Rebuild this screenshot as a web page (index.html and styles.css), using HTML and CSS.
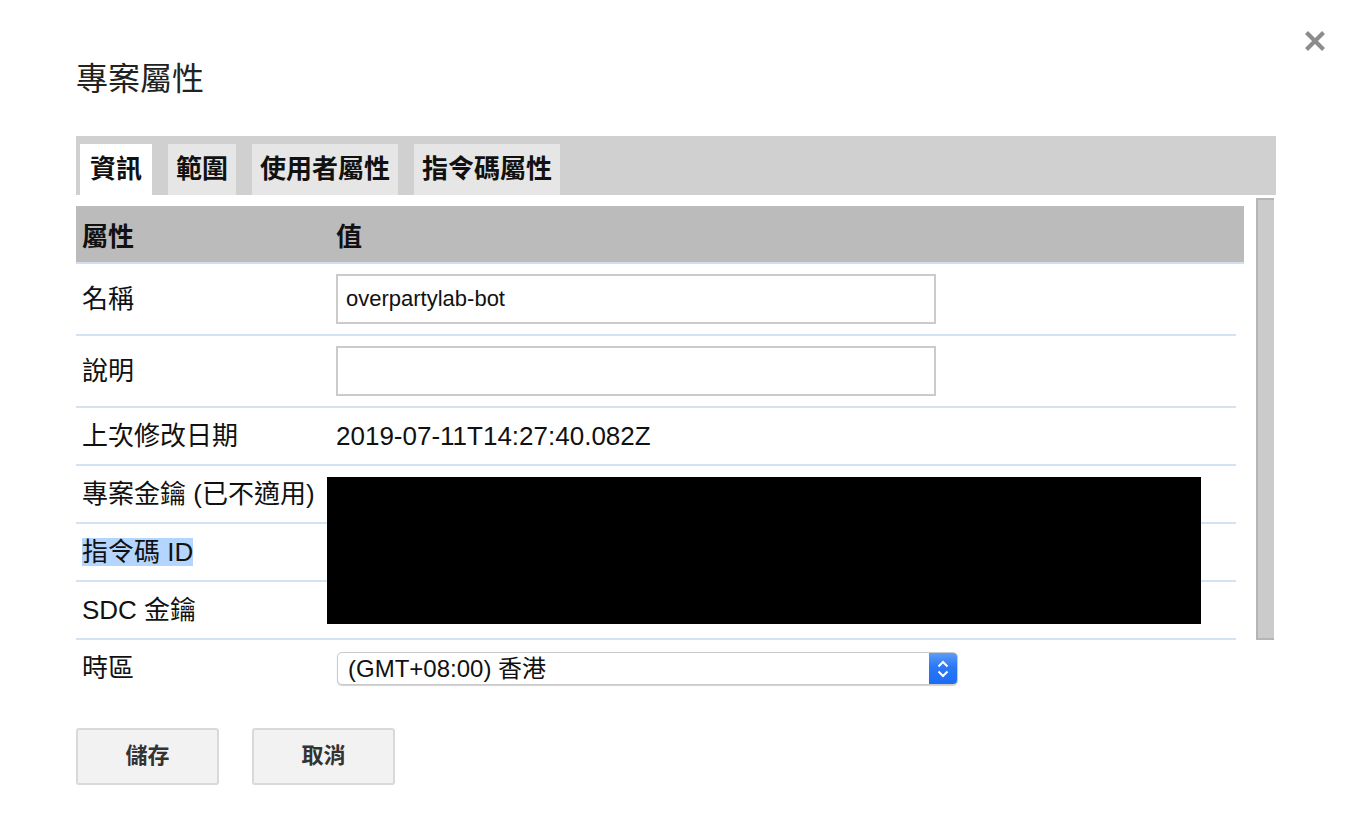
FILE: index.html
```html
<!DOCTYPE html>
<html lang="zh-Hant">
<head>
<meta charset="utf-8">
<title>專案屬性</title>
<link rel="stylesheet" href="styles.css">
</head>
<body>
<div class="dialog">
  <button class="close" aria-label="close">
    <svg width="22" height="22" viewBox="0 0 22 22"><path d="M2.5 2.5 L19.5 19.5 M19.5 2.5 L2.5 19.5" stroke="#8c8c8c" stroke-width="4.2" stroke-linecap="butt"/></svg>
  </button>
  <h1 class="title">專案屬性</h1>
  <div class="tabbar">
    <div class="tab active">資訊</div>
    <div class="tab">範圍</div>
    <div class="tab">使用者屬性</div>
    <div class="tab">指令碼屬性</div>
  </div>
  <div class="content">
    <div class="table">
      <div class="thead">
        <div class="c1">屬性</div>
        <div class="c2">值</div>
      </div>
      <div class="rows">
        <div class="row tall">
          <div class="c1">名稱</div>
          <div class="c2"><div class="input">overpartylab-bot</div></div>
        </div>
        <div class="row tall">
          <div class="c1">說明</div>
          <div class="c2"><div class="input"></div></div>
        </div>
        <div class="row">
          <div class="c1">上次修改日期</div>
          <div class="c2">2019-07-11T14:27:40.082Z</div>
        </div>
        <div class="row">
          <div class="c1">專案金鑰 (已不適用)</div>
          <div class="c2"></div>
        </div>
        <div class="row">
          <div class="c1"><span class="sel">指令碼 ID</span></div>
          <div class="c2"></div>
        </div>
        <div class="row">
          <div class="c1">SDC 金鑰</div>
          <div class="c2"></div>
        </div>
        <div class="row last">
          <div class="c1">時區</div>
          <div class="c2">
            <div class="select">
              <span class="select-text">(GMT+08:00) 香港</span>
              <span class="stepper">
                <svg width="14" height="20" viewBox="0 0 14 20"><path d="M2.5 7.5 L7 3 L11.5 7.5 M2.5 12.5 L7 17 L11.5 12.5" stroke="#fff" stroke-width="2" fill="none"/></svg>
              </span>
            </div>
          </div>
        </div>
        <div class="redact"></div>
      </div>
    </div>
    <div class="scrollbar"></div>
  </div>
  <div class="actions">
    <button class="btn">儲存</button>
    <button class="btn">取消</button>
  </div>
</div>
</body>
</html>
```
FILE: styles.css
```css
html, body {
  margin: 0;
  padding: 0;
  background: #fff;
}
body {
  font-family: "Liberation Sans", "Noto Sans CJK TC", sans-serif;
  color: #111;
}
.dialog {
  position: relative;
  width: 1200px;
  padding: 59px 0 0 76px;
}
.close {
  position: absolute;
  left: 1304px;
  top: 30px;
  width: 22px;
  height: 22px;
  padding: 0;
  border: 0;
  background: none;
  filter: blur(0.4px);
}
.close svg { display: block; }
.title {
  margin: 0;
  font-size: 32px;
  line-height: 40px;
  font-weight: normal;
  color: #222;
}
.tabbar {
  margin-top: 37px;
  height: 59px;
  background: #d0d0d0;
  display: flex;
  align-items: flex-end;
  gap: 16px;
  padding-left: 4px;
  box-sizing: border-box;
}
.tab {
  height: 51px;
  padding: 0 8px;
  background: #e6e6e6;
  font-size: 26px;
  font-weight: bold;
  line-height: 51px;
  color: #111;
}
.tab.active {
  background: #fff;
  padding: 0 10px;
}
.content {
  margin-top: 3px;
  display: flex;
  align-items: flex-start;
}
.table {
  width: 1168px;
  margin-top: 8px;
}
.thead {
  height: 56px;
  background: #bbbbbb;
  border-bottom: 2px solid #cfe0f2;
  display: flex;
  align-items: center;
  font-size: 26px;
  font-weight: bold;
}
.c1 {
  width: 254px;
  padding-left: 6px;
  flex: none;
}
.c2 {
  flex: 1;
}
.rows {
  position: relative;
  width: 1160px;
}
.row {
  height: 56px;
  border-bottom: 2px solid #d3e3f3;
  display: flex;
  align-items: center;
  font-size: 26px;
  line-height: 30px;
}
.row.tall {
  height: 70px;
}
.row.last {
  height: 62px;
  border-bottom: 0;
  align-items: flex-start;
}
.row.last .c1 { padding-top: 13px; }
.input {
  height: 46px;
  border: 2px solid #cbcbcb;
  font-size: 22px;
  line-height: 46px;
  padding-left: 8px;
  box-sizing: content-box;
  width: 588px;
}
.sel {
  display: inline-block;
  background: #b4d5fe;
  line-height: 28px;
}
.select {
  margin-top: 12px;
  margin-left: 1px;
  width: 619px;
  height: 31px;
  border: 1px solid #c9c9c9;
  border-radius: 5px;
  box-shadow: 0 1px 1px rgba(0,0,0,0.18);
  display: flex;
  align-items: center;
  overflow: hidden;
  background: #fff;
}
.select-text {
  flex: 1;
  padding-left: 10px;
  font-size: 24px;
  line-height: 31px;
}
.stepper {
  width: 28px;
  height: 31px;
  background: linear-gradient(#5d9cf9, #2a78f6 45%, #1c6cf5);
  display: flex;
  align-items: center;
  justify-content: center;
}
.redact {
  position: absolute;
  left: 251px;
  top: 213px;
  width: 874px;
  height: 147px;
  background: #000;
}
.scrollbar {
  width: 16px;
  height: 438px;
  margin-left: 12px;
  background: #cbcbcb;
  border-left: 2px solid #b5b5b5;
  border-top: 2px solid #b5b5b5;
  border-bottom: 2px solid #b5b5b5;
  flex: none;
}
.actions {
  margin-top: 26px;
  display: flex;
  gap: 33px;
}
.btn {
  width: 143px;
  height: 57px;
  background: #f2f2f2;
  border: 2px solid #d9d9d9;
  border-radius: 3px;
  font-family: "Liberation Sans", "Noto Sans CJK TC", sans-serif;
  font-size: 22px;
  line-height: 26px;
  font-weight: bold;
  color: #333;
  padding: 0 0 1px 0;
}
```
